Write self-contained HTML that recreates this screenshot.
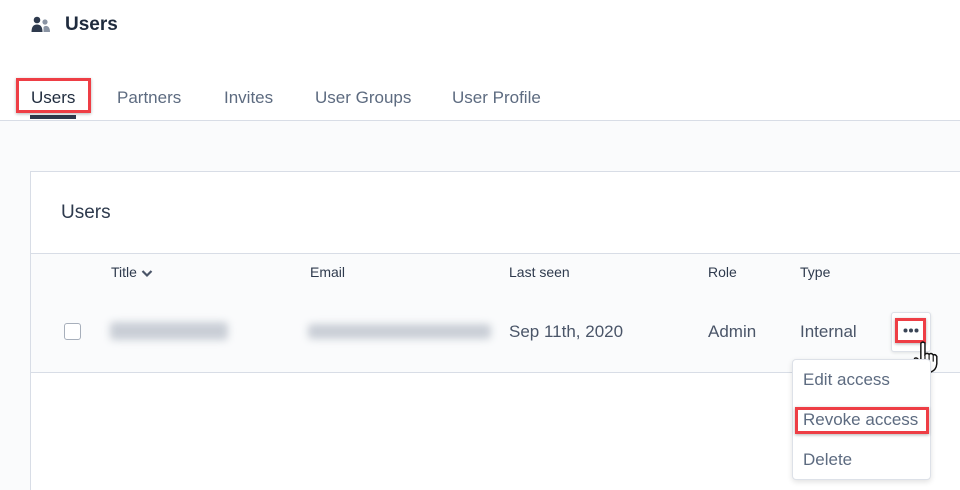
<!DOCTYPE html>
<html><head><meta charset="utf-8"><style>
*{margin:0;padding:0;box-sizing:border-box}
html,body{width:960px;height:490px;overflow:hidden}
body{background:#fafbfc;font-family:"Liberation Sans",sans-serif;position:relative;color:#2e3a4d}
.top{position:absolute;left:0;top:0;width:960px;height:121px;background:#fff;border-bottom:1px solid #d8dde6}
.abs{position:absolute;white-space:nowrap}
.tab{position:absolute;top:88px;font-size:17px;color:#5d6b80}
.red{position:absolute;border:3px solid #ee3e45;box-shadow:0 1px 3px rgba(0,0,0,.3)}
.card{position:absolute;left:30px;top:171px;width:940px;height:340px;background:#fff;border:1px solid #d8dde6}
.hrow{position:absolute;left:31px;top:253px;width:929px;height:40px;background:#fafbfc;border-top:1px solid #d8dde6;border-bottom:1px solid #d8dde6}
.drow{position:absolute;left:31px;top:292px;width:929px;height:81px;background:#fafbfc;border-bottom:1px solid #d8dde6}
.h{position:absolute;top:264px;font-size:14px;color:#2e3a4d}
.d{position:absolute;top:322px;font-size:17px;color:#4a5568}
.blur{position:absolute;background:#c9ced6;filter:blur(4px);border-radius:4px}
.menu{position:absolute;left:792px;top:359px;width:139px;height:121px;background:#fff;border:1px solid #dde1e8;border-radius:4px;box-shadow:0 2px 6px rgba(0,0,0,.12)}
.mi{position:absolute;left:803px;font-size:17px;color:#5d6b80}
</style></head><body>
<div class="top"></div>
<svg class="abs" style="left:31px;top:16px" width="20" height="18" viewBox="0 0 20 18"><circle cx="6" cy="4" r="3.3" fill="#2e3a4d"/><path d="M0.5 16 Q0.5 8.5 6 8.5 Q11.5 8.5 11.5 16 Z" fill="#2e3a4d"/><circle cx="14" cy="6" r="2.6" fill="#8a94a3"/><path d="M12.5 16 L12.5 11 Q14 9.5 16 10 Q19 11 19 16 Z" fill="#8a94a3"/></svg>
<div class="abs" style="left:65px;top:14px;font-size:19px;color:#1f2b3d;font-weight:bold">Users</div>
<div class="tab" style="left:31px;color:#1f2b3d">Users</div>
<div class="abs" style="left:30px;top:115px;width:46px;height:4px;background:#2e3a4d"></div>
<div class="red" style="left:16px;top:78px;width:75px;height:35px"></div>
<div class="tab" style="left:117px">Partners</div>
<div class="tab" style="left:224px">Invites</div>
<div class="tab" style="left:315px">User Groups</div>
<div class="tab" style="left:452px">User Profile</div>
<div class="card"></div>
<div class="abs" style="left:61px;top:202px;font-size:19px;color:#2e3a4d">Users</div>
<div class="hrow"></div>
<div class="drow"></div>
<div class="h" style="left:111px">Title <svg width="12" height="9" viewBox="0 0 12 9" style="vertical-align:middle"><path d="M1.5 2 L6 6.5 L10.5 2" stroke="#4a5568" stroke-width="2.2" fill="none"/></svg></div>
<div class="h" style="left:310px">Email</div>
<div class="h" style="left:509px">Last seen</div>
<div class="h" style="left:708px">Role</div>
<div class="h" style="left:800px">Type</div>
<div class="abs" style="left:64px;top:323px;width:17px;height:17px;border:1px solid #a7afbb;border-radius:3px;background:#fff"></div>
<div class="blur" style="left:110px;top:322px;width:118px;height:18px"></div>
<div class="blur" style="left:308px;top:324px;width:183px;height:15px"></div>
<div class="d" style="left:509px">Sep 11th, 2020</div>
<div class="d" style="left:708px">Admin</div>
<div class="d" style="left:800px">Internal</div>
<div class="abs" style="left:891px;top:312px;width:40px;height:40px;background:#fff;border:1px solid #dde1e8;border-radius:3px;box-shadow:0 1px 3px rgba(0,0,0,.1)"></div>
<div class="red" style="left:895px;top:318px;width:31px;height:25px"></div>
<svg class="abs" style="left:903px;top:328px" width="16" height="5"><circle cx="2.5" cy="2.5" r="2" fill="#3a4556"/><circle cx="8" cy="2.5" r="2" fill="#3a4556"/><circle cx="13.5" cy="2.5" r="2" fill="#3a4556"/></svg>
<svg class="abs" style="left:911px;top:340px" width="30" height="34" viewBox="0 0 28 33"><path d="M9 3 Q11 1 13 3 L13 14 Q15 12 17 14 Q19 12 21 14.5 Q23 13.5 24.5 16 L24.5 23 Q24 29 19 31 L13 31 Q10 29 7 25 L3 20 Q2 17 5 17.5 L9 21 Z" fill="#fff" stroke="#111" stroke-width="1.4"/><path d="M13 14 L13 21 M17 14 L17 21 M21 14.5 L21 21" stroke="#111" stroke-width="1.1"/></svg>
<div class="menu"></div>
<div class="mi" style="top:370px">Edit access</div>
<div class="mi" style="top:410px">Revoke access</div>
<div class="red" style="left:795px;top:407px;width:134px;height:27px"></div>
<div class="mi" style="top:450px">Delete</div>
</body></html>
